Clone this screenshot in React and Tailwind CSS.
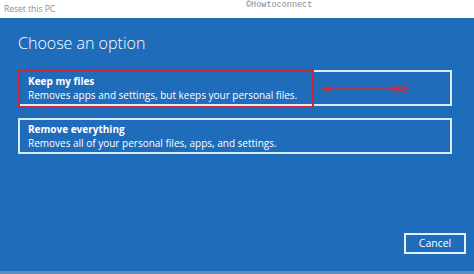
import React from "react";

const options = [
  {
    title: "Keep my files",
    desc: "Removes apps and settings, but keeps your personal files.",
    marked: true,
  },
  {
    title: "Remove everything",
    desc: "Removes all of your personal files, apps, and settings.",
    marked: false,
  },
];

const Arrow = () => (
  <svg
    className="absolute left-[299px] top-[10px]"
    width="94"
    height="14"
    viewBox="0 0 94 14"
  >
    <line x1="4" y1="7" x2="90" y2="7" stroke="#d42a3c" strokeWidth="1.3" />
    <path d="M1 7 L12 3.5 L9.5 7 L12 10.5 Z" fill="#d42a3c" />
    <path
      d="M70 7 L80 3.5 M70 7 L80 10.5 M77 7 L88 3.5 M77 7 L88 10.5"
      stroke="#d42a3c"
      strokeWidth="1.3"
      fill="none"
    />
  </svg>
);

export default function App() {
  return (
    <div
      className="w-[474px] h-[274px] flex flex-col overflow-hidden"
      style={{ fontFamily: "'Open Sans', 'Noto Sans', sans-serif" }}
    >
      <div className="h-[18px] bg-white relative flex items-center px-[4px]">
        <span className="text-[8.5px] text-[#8a8a8a]">Reset this PC</span>
        <span className="absolute left-[246px] top-[0px] text-[8.5px] leading-[10px] text-[#8a8a8a] font-['Liberation_Mono',monospace]">
          ©Howtoconnect
        </span>
      </div>

      <div className="flex-1 bg-[#1f6cbb] flex flex-col px-[18px] pt-[14px]">
        <h1 className="text-[16px] leading-[22px] font-light text-white">
          Choose an option
        </h1>

        <div className="mt-[16px] flex flex-col gap-[12px]">
          {options.map((o) => (
            <div
              key={o.title}
              className="relative w-[434px] h-[36px] border-2 border-[#d8ebfb] px-[8px] flex flex-col justify-center text-white"
            >
              <div className="text-[10px] leading-[14px] font-bold">{o.title}</div>
              <div className="text-[10px] leading-[14px]">{o.desc}</div>
              {o.marked && (
                <>
                  <div className="absolute left-[-2px] top-[-2px] w-[296px] h-[38px] border-2 border-[#c9283b]" />
                  <Arrow />
                </>
              )}
            </div>
          ))}
        </div>

        <div className="mt-auto mb-[17px] flex justify-end mr-[-10px]">
          <button className="w-[62px] h-[21px] border-2 border-[#e3f0fb] text-white text-[10.5px] leading-none">
            Cancel
          </button>
        </div>
      </div>
      <div className="h-[3px] bg-[#5d8cc0]" />
    </div>
  );
}
